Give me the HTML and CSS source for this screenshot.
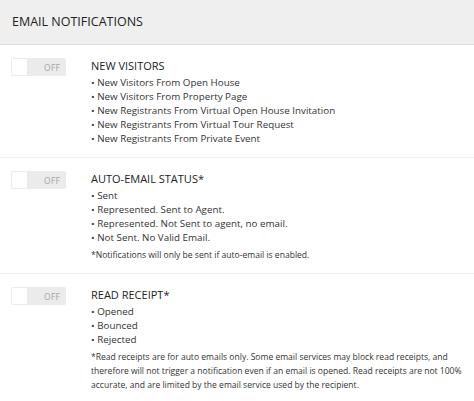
FILE: index.html
```html
<!DOCTYPE html>
<html>
<head>
<meta charset="utf-8">
<link rel="stylesheet" href="styles.css">
</head>
<body>
<div class="panel">
  <div class="panel-header">EMAIL NOTIFICATIONS</div>

  <div class="section">
    <div class="toggle"><span class="knob"></span><span class="toggle-label">OFF</span></div>
    <div class="content">
      <div class="title">NEW VISITORS</div>
      <ul class="items">
        <li>• New Visitors From Open House</li>
        <li>• New Visitors From Property Page</li>
        <li>• New Registrants From Virtual Open House Invitation</li>
        <li>• New Registrants From Virtual Tour Request</li>
        <li>• New Registrants From Private Event</li>
      </ul>
    </div>
  </div>

  <div class="section">
    <div class="toggle"><span class="knob"></span><span class="toggle-label">OFF</span></div>
    <div class="content">
      <div class="title">AUTO-EMAIL STATUS*</div>
      <ul class="items">
        <li>• Sent</li>
        <li>• Represented. Sent to Agent.</li>
        <li>• Represented. Not Sent to agent, no email.</li>
        <li>• Not Sent. No Valid Email.</li>
      </ul>
      <p class="note">*Notifications will only be sent if auto-email is enabled.</p>
    </div>
  </div>

  <div class="section last">
    <div class="toggle"><span class="knob"></span><span class="toggle-label">OFF</span></div>
    <div class="content">
      <div class="title">READ RECEIPT*</div>
      <ul class="items">
        <li>• Opened</li>
        <li>• Bounced</li>
        <li>• Rejected</li>
      </ul>
      <p class="note">*Read receipts are for auto emails only. Some email services may block read receipts, and therefore will not trigger a notification even if an email is opened. Read receipts are not 100% accurate, and are limited by the email service used by the recipient.</p>
    </div>
  </div>
</div>
</body>
</html>
```

FILE: styles.css
```css
html, body {
  margin: 0;
  padding: 0;
  background: #ffffff;
}

body {
  font-family: "Open Sans", "Liberation Sans", sans-serif;
  color: #222222;
  width: 474px;
}

.panel {
  width: 474px;
}

.panel-header {
  background: #efefef;
  border-bottom: 1px solid #dedede;
  box-sizing: border-box;
  height: 45px;
  padding: 13px 0 0 12px;
  font-size: 12.5px;
  line-height: 18px;
  color: #222222;
}

.section {
  display: flex;
  align-items: flex-start;
  padding: 13px 0 11px 11px;
  border-bottom: 1px solid #f0f0f0;
}

.section.last {
  border-bottom: none;
}

.toggle {
  width: 55px;
  height: 18px;
  box-sizing: border-box;
  background: #ebebeb;
  border-radius: 2px;
  display: flex;
  align-items: center;
  padding: 1px;
  flex: none;
}

.knob {
  width: 15px;
  height: 16px;
  background: #ffffff;
  border-radius: 1px;
  flex: none;
}

.toggle-label {
  margin-left: 17px;
  font-size: 8.5px;
  color: #a5a5a5;
  letter-spacing: 0.3px;
}

.content {
  margin-left: 25px;
  flex: 1;
}

.title {
  font-size: 11px;
  line-height: 16px;
  color: #222222;
  margin-bottom: 2px;
}

.items {
  list-style: none;
  margin: 0;
  padding: 0;
  font-size: 9.8px;
  line-height: 14px;
  color: #333333;
}

.note {
  margin: 3px 0 0 0;
  font-size: 8.55px;
  line-height: 14px;
  color: #333333;
}
```
